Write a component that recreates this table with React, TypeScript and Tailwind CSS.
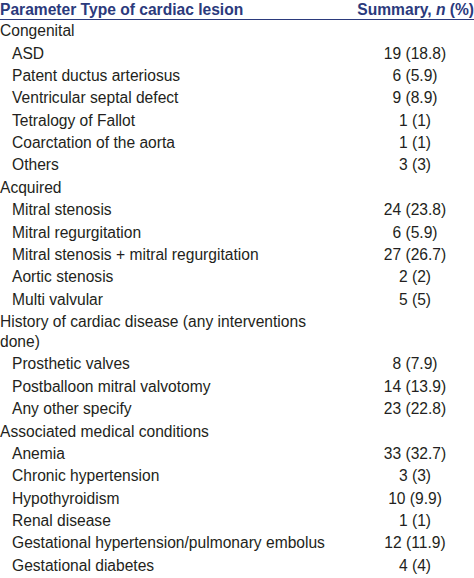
const rows: { label: string; value?: string; indent?: boolean }[] = [
  { label: "Congenital" },
  { label: "ASD", value: "19 (18.8)", indent: true },
  { label: "Patent ductus arteriosus", value: "6 (5.9)", indent: true },
  { label: "Ventricular septal defect", value: "9 (8.9)", indent: true },
  { label: "Tetralogy of Fallot", value: "1 (1)", indent: true },
  { label: "Coarctation of the aorta", value: "1 (1)", indent: true },
  { label: "Others", value: "3 (3)", indent: true },
  { label: "Acquired" },
  { label: "Mitral stenosis", value: "24 (23.8)", indent: true },
  { label: "Mitral regurgitation", value: "6 (5.9)", indent: true },
  { label: "Mitral stenosis + mitral regurgitation", value: "27 (26.7)", indent: true },
  { label: "Aortic stenosis", value: "2 (2)", indent: true },
  { label: "Multi valvular", value: "5 (5)", indent: true },
  { label: "History of cardiac disease (any interventions done)" },
  { label: "Prosthetic valves", value: "8 (7.9)", indent: true },
  { label: "Postballoon mitral valvotomy", value: "14 (13.9)", indent: true },
  { label: "Any other specify", value: "23 (22.8)", indent: true },
  { label: "Associated medical conditions" },
  { label: "Anemia", value: "33 (32.7)", indent: true },
  { label: "Chronic hypertension", value: "3 (3)", indent: true },
  { label: "Hypothyroidism", value: "10 (9.9)", indent: true },
  { label: "Renal disease", value: "1 (1)", indent: true },
  { label: "Gestational hypertension/pulmonary embolus", value: "12 (11.9)", indent: true },
  { label: "Gestational diabetes", value: "4 (4)", indent: true },
]

export default function App() {
  return (
    <div className="w-[474px] h-[578px] overflow-hidden bg-white font-['Liberation_Sans',Arial,sans-serif] text-[15.6px] text-[#231f20]">
      {/* Header */}
      <div className="grid grid-cols-[1fr_118px] items-end h-[20px] border-b-[1.5px] border-[#2b3a7c] text-[#2b3a7c] font-bold leading-[18px]">
        <div className="whitespace-nowrap">Parameter Type of cardiac lesion</div>
        <div className="text-right whitespace-nowrap">
          Summary, <span className="italic">n</span> (%)
        </div>
      </div>

      {rows.map((row, i) => (
        <div key={i} className="grid grid-cols-[1fr_118px] py-[1.2px] leading-[20px]">
          <div className={row.indent ? "pl-[12px]" : "w-[312px]"}>{row.label}</div>
          {row.value && <div className="text-center">{row.value}</div>}
        </div>
      ))}
    </div>
  )
}
